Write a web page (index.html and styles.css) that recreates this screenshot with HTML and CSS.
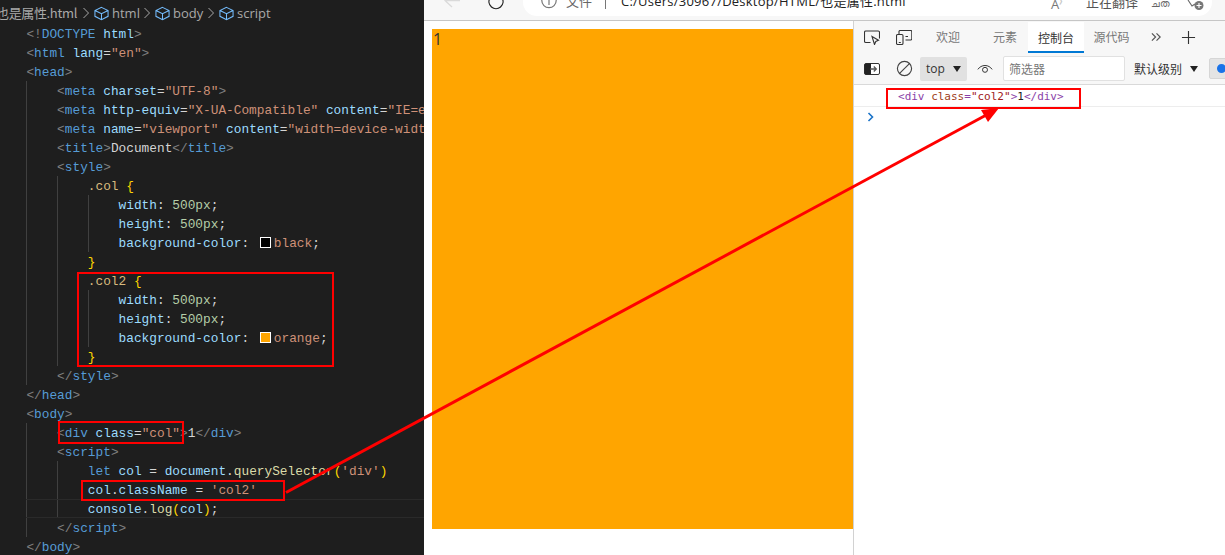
FILE: index.html
```html
<!DOCTYPE html>
<html lang="zh">
<head>
<meta charset="UTF-8">
<title>也是属性.html</title>
<link rel="stylesheet" href="styles.css">
</head>
<body>
<div class="page">
  <section class="editor">
    <nav class="crumbs">
      <span class="crumb-file">也是属性.html</span>
      <svg class="chev" viewBox="0 0 8 12"><path d="M1.500 1 6.500 6 1.500 11"/></svg>
      <svg class="cube" viewBox="0 0 16 16"><path d="M8 1.500 15 4.800V11L8 14.500 1 11V4.800ZM1 4.800 8 8.200 15 4.800M8 8.200V14.500"/></svg>
      <span class="crumb-a">html</span>
      <svg class="chev" viewBox="0 0 8 12"><path d="M1.500 1 6.500 6 1.500 11"/></svg>
      <svg class="cube" viewBox="0 0 16 16"><path d="M8 1.500 15 4.800V11L8 14.500 1 11V4.800ZM1 4.800 8 8.200 15 4.800M8 8.200V14.500"/></svg>
      <span class="crumb-b">body</span>
      <svg class="chev" viewBox="0 0 8 12"><path d="M1.500 1 6.500 6 1.500 11"/></svg>
      <svg class="cube" viewBox="0 0 16 16"><path d="M8 1.500 15 4.800V11L8 14.500 1 11V4.800ZM1 4.800 8 8.200 15 4.800M8 8.200V14.500"/></svg>
      <span class="crumb-c">script</span>
    </nav>
    <div class="code">
      <div class="ln"><i>&lt;!</i><b>DOCTYPE</b> <u>html</u><i>&gt;</i></div>
      <div class="ln"><i>&lt;</i><b>html</b> <u>lang</u><em>=</em><s>"en"</s><i>&gt;</i></div>
      <div class="ln"><i>&lt;</i><b>head</b><i>&gt;</i></div>
      <div class="ind">
        <div class="ln"><i>&lt;</i><b>meta</b> <u>charset</u><em>=</em><s>"UTF-8"</s><i>&gt;</i></div>
        <div class="ln"><i>&lt;</i><b>meta</b> <u>http-equiv</u><em>=</em><s>"X-UA-Compatible"</s> <u>content</u><em>=</em><s>"IE=e</s></div>
        <div class="ln"><i>&lt;</i><b>meta</b> <u>name</u><em>=</em><s>"viewport"</s> <u>content</u><em>=</em><s>"width=device-widt</s></div>
        <div class="ln"><i>&lt;</i><b>title</b><i>&gt;</i><em>Document</em><i>&lt;/</i><b>title</b><i>&gt;</i></div>
        <div class="ln"><i>&lt;</i><b>style</b><i>&gt;</i></div>
        <div class="ind">
          <div class="ln"><span class="sel">.col</span> <span class="brace">{</span></div>
          <div class="ind">
            <div class="ln"><u>width</u><em>:</em> <span class="num">500px</span><em>;</em></div>
            <div class="ln"><u>height</u><em>:</em> <span class="num">500px</span><em>;</em></div>
            <div class="ln"><u>background-color</u><em>:</em> <span class="swatch swatch-black"></span><s>black</s><em>;</em></div>
          </div>
          <div class="ln"><span class="brace">}</span></div>
          <div class="ln"><span class="sel">.col2</span> <span class="brace">{</span></div>
          <div class="ind">
            <div class="ln"><u>width</u><em>:</em> <span class="num">500px</span><em>;</em></div>
            <div class="ln"><u>height</u><em>:</em> <span class="num">500px</span><em>;</em></div>
            <div class="ln"><u>background-color</u><em>:</em> <span class="swatch swatch-orange"></span><s>orange</s><em>;</em></div>
          </div>
          <div class="ln"><span class="brace">}</span></div>
        </div>
        <div class="ln"><i>&lt;/</i><b>style</b><i>&gt;</i></div>
      </div>
      <div class="ln"><i>&lt;/</i><b>head</b><i>&gt;</i></div>
      <div class="ln"><i>&lt;</i><b>body</b><i>&gt;</i></div>
      <div class="ind">
        <div class="ln"><i>&lt;</i><b>div</b> <u>class</u><em>=</em><s>"col"</s><i>&gt;</i><em>1</em><i>&lt;/</i><b>div</b><i>&gt;</i></div>
        <div class="ln"><i>&lt;</i><b>script</b><i>&gt;</i></div>
        <div class="ind">
          <div class="ln"><b>let</b> <u>col</u> <em>=</em> <u>document</u><em>.</em><span class="fn">querySelector</span><span class="brace">(</span><s>'div'</s><span class="brace">)</span></div>
          <div class="ln"><u>col</u><em>.</em><u>className</u> <em>=</em> <s>'col2'</s></div>
          <div class="ln ln-current"><u>console</u><em>.</em><span class="fn">log</span><span class="brace">(</span><u>col</u><span class="brace">)</span><em>;</em></div>
        </div>
        <div class="ln"><i>&lt;/</i><b>script</b><i>&gt;</i></div>
      </div>
      <div class="ln"><i>&lt;/</i><b>body</b><i>&gt;</i></div>
    </div>
  </section>

  <section class="browser">
    <header class="toolbar">
      <svg class="tb-back" viewBox="0 0 16 10"><path d="M16 0.500H1M8-6 1 0.500 8 7"/></svg>
      <svg class="tb-reload" viewBox="0 0 16 10"><path d="M2-2A7 7 0 1 0 14-2"/></svg>
      <div class="address">
        <svg class="tb-info" viewBox="0 0 16 10"><circle cx="8" cy="0.500" r="7.200"/><path d="M8 0V5"/></svg>
        <span class="file-label">文件</span>
        <span class="sep"></span>
        <span class="url">C:/Users/30967/Desktop/HTML/也是属性.html</span>
        <span class="read">A<sup>》</sup></span>
        <span class="translate">正在翻译</span>
        <span class="cut">ചത</span>
        <svg class="tb-fav" viewBox="0 0 20 14"><path d="M2 0 6 6 9 4" /><circle cx="13" cy="5.500" r="4.500"/><path d="M10.500 5.500H15.500M13 3V8" class="plus"/></svg>
      </div>
    </header>
    <div class="split">
      <div class="viewport"><div class="col2">1</div></div>
      <div class="devtools">
        <div class="tabs">
          <svg class="dt-icon dt-inspect" viewBox="0 0 16 15"><path d="M6.500 12.500H1.800A1.300 1.300 0 0 1 0.500 11.200V2.300A1.300 1.300 0 0 1 1.800 1H14.200A1.300 1.300 0 0 1 15.500 2.300V8.500"/><path d="M8 6.500 14.500 10.300 11.800 11.500 10.500 14.500Z"/></svg>
          <svg class="dt-icon dt-device" viewBox="0 0 16 15"><rect x="0.500" y="4.500" width="6.500" height="10" rx="1.200"/><path d="M3 4V1.500A1 1 0 0 1 4 0.500H14.800A1 1 0 0 1 15.800 1.500V9A1 1 0 0 1 14.800 10H9.500M9.500 6.500H12M2.800 12.500H4.800"/></svg>
          <span class="tab tab-welcome">欢迎</span>
          <span class="tab tab-elements">元素</span>
          <span class="tab tab-active">控制台</span>
          <span class="tab tab-source">源代码</span>
          <svg class="more" viewBox="0 0 12 10"><path d="M1 1 5 5 1 9M6 1 10 5 6 9"/></svg>
          <svg class="plus-tab" viewBox="0 0 16 16"><path d="M8 1V15M1 8H15"/></svg>
        </div>
        <div class="filters">
          <svg class="f-side" viewBox="0 0 16 12"><rect x="0.500" y="0.500" width="15" height="11" rx="1.500" class="f-frame"/><path d="M0.500 2A1.500 1.500 0 0 1 2 0.500H7V11.500H2A1.500 1.500 0 0 1 0.500 10Z" class="f-fill"/><path d="M6 6H12M9.800 3.500 12.300 6 9.800 8.500" class="f-arrow"/></svg>
          <svg class="f-clear" viewBox="0 0 18 18"><circle cx="9" cy="9" r="7.500"/><path d="M3.800 14.200 14.200 3.800"/></svg>
          <div class="ctx"><span>top</span><span class="tri"></span></div>
          <svg class="f-eye" viewBox="0 0 18 12"><path d="M1 7A9.500 9.500 0 0 1 17 7"/><circle cx="9" cy="7.500" r="2.800"/></svg>
          <div class="filter-input">筛选器</div>
          <span class="level">默认级别</span><span class="tri tri-level"></span>
          <div class="issue"><span class="issue-dot"></span></div>
        </div>
        <div class="log"><span class="t-p">&lt;</span><span class="t-n">div</span> <span class="t-n2">class</span><span class="t-p">=</span><span class="t-s">"col2"</span><span class="t-p">&gt;</span><span class="t-x">1</span><span class="t-p">&lt;/</span><span class="t-n">div</span><span class="t-p">&gt;</span></div>
        <div class="prompt"><svg viewBox="0 0 7 10"><path d="M1.500 1 5.500 5 1.500 9"/></svg></div>
      </div>
    </div>
  </section>

  <div class="note note-rule"></div>
  <div class="note note-div"></div>
  <div class="note note-class"></div>
  <div class="note note-log"></div>
  <svg class="arrow" viewBox="0 0 1225 555"><path class="arrow-line" d="M286 492.500 990 113"/><path class="arrow-head" d="M999 108 981 110 988 122Z"/></svg>
</div>
</body>
</html>
```
FILE: styles.css
```css
* { box-sizing: border-box; }
html, body { margin: 0; height: 100%; background: #fff; overflow: hidden; }
.page { position: relative; display: flex; width: 1225px; height: 555px; overflow: hidden; }

/* editor */
.editor { width: 424px; height: 555px; flex: none; background: #1e1e1e; overflow: hidden; }
.crumbs { display: flex; align-items: center; height: 24px; padding-top: 2px; color: #a9a9a9; font: 13px/22px "Open Sans", "Noto Sans CJK SC", sans-serif; white-space: nowrap; }
.crumb-file { width: 86px; margin-left: -4px; flex: none; font-family: "Noto Sans CJK SC", sans-serif; letter-spacing: -0.350px; }
.crumbs span { flex: none; }
.chev { width: 8px; height: 12px; flex: none; margin-right: 4px; fill: none; stroke: #a9a9a9; stroke-width: 1; }
.cube { width: 15px; height: 15px; flex: none; margin-right: 3px; fill: none; stroke: #75beff; stroke-width: 1.100; }
.crumb-a { width: 31px; }
.crumb-b { width: 34px; }
.code { padding-left: 26.400px; font: 12.800px/19px "Liberation Mono", monospace; color: #d4d4d4; }
.ln { height: 19px; padding-top: 0.500px; white-space: pre; }
.ind { padding-left: 30.720px; box-shadow: inset 1px 0 0 #404040; }
.ln i, .ln b, .ln u, .ln em, .ln s { font-style: normal; font-weight: 400; text-decoration: none; }
.ln i { color: #808080; }
.ln b { color: #569cd6; }
.ln u { color: #9cdcfe; }
.ln em { color: #d4d4d4; }
.ln s { color: #ce9178; }
.sel { color: #d7ba7d; }
.brace { color: #ffd700; }
.num { color: #b5cea8; }
.fn { color: #dcdcaa; }
.swatch { display: inline-block; width: 11px; height: 11px; margin: 0 3px; vertical-align: -1px; border: 1px solid #fff; }
.swatch-black { background: #000; }
.swatch-orange { background: #ffa500; }
.ln-current { width: 420px; margin-left: -61.440px; padding-left: 61.440px; box-shadow: inset 0 1px 0 #2a2a2a, inset 0 -1px 0 #2a2a2a; }

/* browser */
.browser { flex: 1; min-width: 0; display: flex; flex-direction: column; }
.toolbar { display: flex; align-items: flex-start; height: 21px; flex: none; padding-left: 20px; background: #f7f7f7; border-bottom: 1px solid #c6c6c6; }
.tb-back { width: 16px; height: 10px; flex: none; fill: none; stroke: #dadada; stroke-width: 1.300; }
.tb-reload { width: 16px; height: 10px; flex: none; margin-left: 28px; fill: none; stroke: #222; stroke-width: 1.300; }
.address { display: flex; align-items: flex-end; width: 689px; height: 16px; margin-left: 19px; padding-left: 18px; background: #fff; border-radius: 0 0 14px 14px; overflow: hidden; font: 14px/16px "Noto Sans CJK SC", sans-serif; color: #555; white-space: nowrap; }
.tb-info { width: 16px; height: 10px; flex: none; align-self: flex-start; fill: none; stroke: #777; stroke-width: 1.200; }
.file-label { width: 26px; margin: 0 0 7px 9px; flex: none; font-size: 13px; color: #666; }
.sep { width: 1px; height: 9px; margin: 0 15px 0 13px; flex: none; align-self: flex-start; background: #777; }
.url { width: 430px; margin-bottom: 7px; flex: none; color: #222; font: 13px/16px "Open Sans", "Noto Sans CJK SC", sans-serif; letter-spacing: 0.240px; }
.read { width: 35px; margin-bottom: 4px; flex: none; color: #777; font: 13px/16px "Open Sans", sans-serif; }
.read sup { font-size: 7px; }
.translate { width: 65px; margin-bottom: 6px; flex: none; font-size: 13px; color: #555; }
.cut { width: 35px; margin-bottom: 5px; flex: none; font: 10px/16px "Noto Sans", sans-serif; color: #666; }
.tb-fav { width: 20px; height: 14px; flex: none; align-self: flex-start; fill: none; stroke: #666; stroke-width: 1.100; }
.tb-fav circle { fill: #777; stroke: none; }
.tb-fav .plus { stroke: #fff; }

.split { flex: 1; display: flex; min-height: 0; }
.viewport { width: 430px; flex: none; padding: 8px 0 0 8px; background: #fff; border-right: 1px solid #d2d2d2; overflow: hidden; }
.col2 { width: 421px; height: 500px; padding-left: 1px; background: #ffa500; color: #333; font: 16px/21px "Open Sans", sans-serif; }

/* devtools */
.devtools { flex: 1; min-width: 0; overflow: hidden; background: #fff; font-family: "Noto Sans CJK SC", sans-serif; }
.tabs { display: flex; align-items: center; height: 32px; padding-left: 10px; background: #f7f7f7; white-space: nowrap; }
.dt-icon { width: 16px; height: 15px; flex: none; fill: none; stroke: #333; stroke-width: 1.100; }
.dt-device { margin-left: 16px; }
.tab { flex: none; font-size: 12px; line-height: 32px; color: #777; text-align: center; }
.tab-welcome { margin-left: 19px; width: 34px; }
.tab-elements { margin-left: 23px; width: 34px; }
.tab-active { margin-left: 6px; width: 56px; height: 31px; background: #fff; color: #333; border-bottom: 2px solid #0078d4; line-height: 31px; }
.tab-source { margin-left: 5px; width: 45px; }
.more { width: 11px; height: 10px; margin-left: 17px; flex: none; fill: none; stroke: #555; stroke-width: 1.300; }
.plus-tab { width: 15px; height: 15px; margin-left: 19px; flex: none; fill: none; stroke: #333; stroke-width: 1.200; }

.filters { display: flex; align-items: center; height: 32px; padding-left: 10px; background: #f7f7f7; border-bottom: 1px solid #d9d9d9; white-space: nowrap; }
.f-side { width: 16px; height: 12px; flex: none; }
.f-frame { fill: #fff; stroke: #333; }
.f-fill { fill: #222; }
.f-arrow { fill: none; stroke: #555; stroke-width: 1.300; }
.f-clear { width: 17px; height: 17px; margin-left: 16px; flex: none; fill: none; stroke: #444; stroke-width: 1.200; }
.ctx { display: flex; align-items: center; width: 47px; height: 24px; margin-left: 7px; padding-left: 6px; flex: none; background: #e1e1e1; border-radius: 2px; color: #333; font: 12px/24px "Open Sans", sans-serif; }
.tri { display: inline-block; width: 0; height: 0; margin-left: 8px; flex: none; border-left: 4.500px solid transparent; border-right: 4.500px solid transparent; border-top: 6px solid #222; }
.f-eye { width: 16px; height: 11px; margin-left: 10px; flex: none; fill: none; stroke: #333; stroke-width: 1.100; }
.filter-input { width: 122px; height: 25px; margin-left: 10px; flex: none; padding-left: 5px; background: #fff; border: 1px solid #e1e1e1; border-radius: 2px; color: #777; font-size: 12px; line-height: 23px; }
.level { width: 48px; margin-left: 9px; flex: none; color: #333; font-size: 12px; }
.tri-level { margin-left: 8px; }
.issue { display: flex; align-items: center; width: 30px; height: 21px; margin-left: 11px; flex: none; padding-left: 7px; background: #e4e4e4; border: 1px solid #d6d6d6; border-radius: 2px; }
.issue-dot { width: 9px; height: 9px; flex: none; border-radius: 50%; background: #1a73e8; }
.log { height: 22px; padding-left: 44px; padding-top: 1px; border-bottom: 1px solid #ededed; font: 11px/22px "DejaVu Sans Mono", monospace; white-space: pre; color: #333; }
.t-p { color: #8a3fa8; }
.t-n { color: #8a3fa8; }
.t-n2 { color: #a04020; }
.t-s { color: #a02020; }
.t-x { color: #222; }
.prompt { height: 20px; padding: 5px 0 0 13px; }
.prompt svg { display: block; width: 7px; height: 10px; fill: none; stroke: #1a73c8; stroke-width: 1.600; }

/* annotations over the screenshot */
.note { position: absolute; border: 2px solid #ff0000; pointer-events: none; }
.note-rule { left: 77px; top: 272px; width: 257px; height: 95px; }
.note-div { left: 58px; top: 421px; width: 126px; height: 23px; }
.note-class { left: 81px; top: 480px; width: 204px; height: 21px; }
.note-log { left: 886px; top: 88px; width: 195px; height: 21px; }
.arrow { position: absolute; left: 0; top: 0; width: 1225px; height: 555px; pointer-events: none; }
.arrow-line { fill: none; stroke: #ff0000; stroke-width: 3; }
.arrow-head { fill: #ff0000; }
```
